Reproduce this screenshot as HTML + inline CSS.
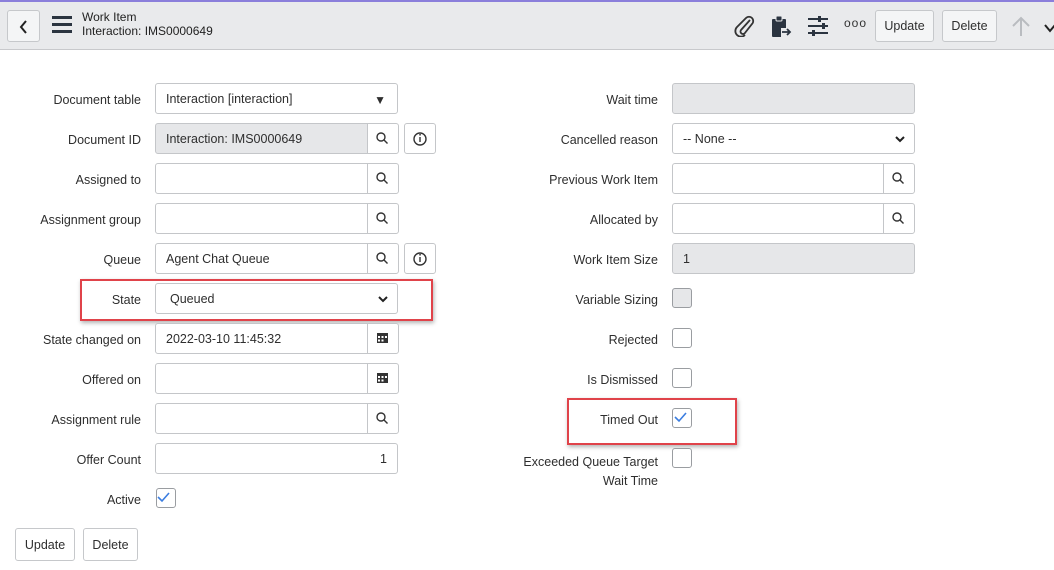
<!DOCTYPE html>
<html><head><style>
*{box-sizing:border-box;margin:0;padding:0}
body{width:1054px;height:570px;background:#fff;font-family:"Liberation Sans",sans-serif;font-size:12.5px;color:#2e2e2e;position:relative;overflow:hidden}
.hdr{position:absolute;left:0;top:0;width:1054px;height:50px;background:#e9eaec;border-top:2px solid #8b7fdb;border-bottom:1px solid #c8c9cc}
.a{position:absolute}
.btn{position:absolute;background:#f4f5f6;border:1px solid #c6c8cb;border-radius:3px;text-align:center;color:#2e2e2e;font-size:12.5px}
.lbl{position:absolute;text-align:right;width:200px;color:#2e2e2e;margin-top:2px}
.in{position:absolute;height:31px;border:1px solid #c4c6c9;border-radius:3px;background:#fff;padding:0 10px;line-height:31px}
.ro{background:#e6e7e9}
.sb{position:absolute;width:32px;height:31px;border:1px solid #c4c6c9;border-radius:0 3px 3px 0;background:#fff}
.ib{position:absolute;width:32px;height:31px;border:1px solid #c4c6c9;border-radius:3px;background:#fff}
.cb{position:absolute;width:20px;height:20px;border:1px solid #9a9da1;border-radius:3px;background:#fff}
.red{position:absolute;border:2px solid #e0434a;box-shadow:1px 2px 4px rgba(0,0,0,.3)}
svg{position:absolute}
</style></head><body>
<div class="hdr">
 <div class="btn" style="left:7px;top:8px;width:33px;height:32px;background:#f4f5f6"><svg style="left:11px;top:9px" width="10" height="14"><path d="M7 1 L2 7 L7 13" stroke="#222" stroke-width="2" fill="none"/></svg></div>
 <svg style="left:52px;top:14px" width="20" height="18"><rect y="0" width="20" height="3" fill="#2b3440"/><rect y="7" width="20" height="3" fill="#2b3440"/><rect y="14" width="20" height="3" fill="#2b3440"/></svg>
 <div class="a" style="left:82px;top:8px;font-size:12px;line-height:14px;color:#222">Work Item<br>Interaction: IMS0000649</div>
 <svg style="left:733px;top:13px" width="22" height="22"><path d="M17 5 L8 15 a2.5 2.5 0 0 0 3.5 3.5 L19 9 a4 4 0 0 0 -6 -6 L4 12 a5.5 5.5 0 0 0 8 8" stroke="#333" stroke-width="1.8" fill="none"/></svg>
 <svg style="left:770px;top:13px" width="22" height="24"><rect x="2" y="4" width="14" height="18" rx="1" fill="#2b3440"/><rect x="6" y="1" width="6" height="5" rx="1" fill="#2b3440" stroke="#e9eaec"/><rect x="11" y="13" width="5" height="9" fill="#e9eaec"/><path d="M12 17 h8 M17 14 l3 3 -3 3" stroke="#2b3440" stroke-width="1.8" fill="none"/></svg>
 <svg style="left:807px;top:14px" width="22" height="20"><path d="M1 3h20M1 10h20M1 17h20" stroke="#2b3440" stroke-width="2"/><rect x="11" y="0" width="3" height="6" fill="#2b3440"/><rect x="15" y="7" width="3" height="6" fill="#2b3440"/><rect x="5" y="14" width="3" height="6" fill="#2b3440"/></svg>
 <div class="a" style="left:844px;top:14px;font-size:12px;letter-spacing:1px;color:#333">ooo</div>
 <div class="btn" style="left:875px;top:8px;width:59px;height:32px;line-height:30px">Update</div>
 <div class="btn" style="left:942px;top:8px;width:55px;height:32px;line-height:30px">Delete</div>
 <svg style="left:1010px;top:13px" width="22" height="22"><path d="M11 21 V3 M3 11 L11 3 L19 11" stroke="#b9bcc0" stroke-width="2" fill="none"/></svg>
 <svg style="left:1044px;top:20px" width="10" height="12"><path d="M1 3 L6 9 L11 3" stroke="#222" stroke-width="2" fill="none"/></svg>
</div>

<div class="lbl" style="left:-59px;top:91px">Document table</div>
<div class="in" style="left:155px;top:83px;width:243px">Interaction [interaction]<span style="position:absolute;right:11px;top:1px;font-size:12px">▼</span></div>

<div class="lbl" style="left:-59px;top:131px">Document ID</div>
<div class="in ro" style="left:155px;top:123px;width:213px;border-radius:3px 0 0 3px">Interaction: IMS0000649</div>
<div class="sb" style="left:367px;top:123px"></div>
<div class="ib" style="left:404px;top:123px"></div>

<div class="lbl" style="left:-59px;top:171px">Assigned to</div>
<div class="in" style="left:155px;top:163px;width:213px;border-radius:3px 0 0 3px"></div>
<div class="sb" style="left:367px;top:163px"></div>

<div class="lbl" style="left:-59px;top:211px">Assignment group</div>
<div class="in" style="left:155px;top:203px;width:213px;border-radius:3px 0 0 3px"></div>
<div class="sb" style="left:367px;top:203px"></div>

<div class="lbl" style="left:-59px;top:251px">Queue</div>
<div class="in" style="left:155px;top:243px;width:213px;border-radius:3px 0 0 3px">Agent Chat Queue</div>
<div class="sb" style="left:367px;top:243px"></div>
<div class="ib" style="left:404px;top:243px"></div>

<div class="lbl" style="left:-59px;top:291px">State</div>
<div class="in" style="left:155px;top:283px;width:243px;padding-left:14px">Queued<svg style="right:9px;top:12px" width="10" height="8"><path d="M1 1 L5 5 L9 1" stroke="#222" stroke-width="2" fill="none"/></svg></div>
<div class="red" style="left:80px;top:279px;width:353px;height:42px"></div>

<div class="lbl" style="left:-59px;top:331px">State changed on</div>
<div class="in" style="left:155px;top:323px;width:213px;border-radius:3px 0 0 3px">2022-03-10 11:45:32</div>
<div class="sb" style="left:367px;top:323px"></div>

<div class="lbl" style="left:-59px;top:371px">Offered on</div>
<div class="in" style="left:155px;top:363px;width:213px;border-radius:3px 0 0 3px"></div>
<div class="sb" style="left:367px;top:363px"></div>

<div class="lbl" style="left:-59px;top:411px">Assignment rule</div>
<div class="in" style="left:155px;top:403px;width:213px;border-radius:3px 0 0 3px"></div>
<div class="sb" style="left:367px;top:403px"></div>

<div class="lbl" style="left:-59px;top:451px">Offer Count</div>
<div class="in" style="left:155px;top:443px;width:243px;text-align:right">1</div>

<div class="lbl" style="left:-59px;top:491px">Active</div>
<div class="cb" style="left:156px;top:488px"></div>

<div class="lbl" style="left:458px;top:91px">Wait time</div>
<div class="in ro" style="left:672px;top:83px;width:243px"></div>
<div class="lbl" style="left:458px;top:131px">Cancelled reason</div>
<div class="in" style="left:672px;top:123px;width:243px">-- None --<svg style="right:9px;top:12px" width="10" height="8"><path d="M1 1 L5 5 L9 1" stroke="#222" stroke-width="2" fill="none"/></svg></div>
<div class="lbl" style="left:458px;top:171px">Previous Work Item</div>
<div class="in" style="left:672px;top:163px;width:212px;border-radius:3px 0 0 3px"></div>
<div class="sb" style="left:883px;top:163px"></div>
<div class="lbl" style="left:458px;top:211px">Allocated by</div>
<div class="in" style="left:672px;top:203px;width:212px;border-radius:3px 0 0 3px"></div>
<div class="sb" style="left:883px;top:203px"></div>
<div class="lbl" style="left:458px;top:251px">Work Item Size</div>
<div class="in ro" style="left:672px;top:243px;width:243px">1</div>
<div class="lbl" style="left:458px;top:291px">Variable Sizing</div>
<div class="cb" style="left:672px;top:288px;background:#e6e7e9"></div>
<div class="lbl" style="left:458px;top:331px">Rejected</div>
<div class="cb" style="left:672px;top:328px"></div>
<div class="lbl" style="left:458px;top:371px">Is Dismissed</div>
<div class="cb" style="left:672px;top:368px"></div>
<div class="lbl" style="left:458px;top:411px">Timed Out</div>
<div class="cb" style="left:672px;top:408px"></div>
<div class="red" style="left:567px;top:398px;width:170px;height:47px"></div>
<div class="lbl" style="left:458px;top:451px;line-height:19px">Exceeded Queue Target<br>Wait Time</div>
<div class="cb" style="left:672px;top:448px"></div>

<div class="btn" style="left:15px;top:528px;width:60px;height:33px;line-height:33px;background:#fff">Update</div>
<div class="btn" style="left:83px;top:528px;width:55px;height:33px;line-height:33px;background:#fff">Delete</div>

<svg width="1054" height="570" style="left:0;top:0">
<g stroke="#333" stroke-width="1.4" fill="none">
<circle cx="381" cy="137" r="4"/><path d="M384 140 l3.5 3.5"/>
<circle cx="381" cy="177" r="4"/><path d="M384 180 l3.5 3.5"/>
<circle cx="381" cy="217" r="4"/><path d="M384 220 l3.5 3.5"/>
<circle cx="381" cy="257" r="4"/><path d="M384 260 l3.5 3.5"/>
<circle cx="381" cy="417" r="4"/><path d="M384 420 l3.5 3.5"/>
<circle cx="897" cy="177" r="4"/><path d="M900 180 l3.5 3.5"/>
<circle cx="897" cy="217" r="4"/><path d="M900 220 l3.5 3.5"/>
<circle cx="420" cy="139" r="6"/><path d="M420 137v5"/>
<circle cx="420" cy="259" r="6"/><path d="M420 257v5"/>
<path d="M158 497 l4 4 l7 -8" stroke="#3b7de0" stroke-width="1.6"/>
<path d="M675 417 l4 4 l7 -8" stroke="#3b7de0" stroke-width="1.6"/>
</g>
<g fill="#333"><rect x="419.3" y="134" width="1.5" height="1.5"/><rect x="419.3" y="254" width="1.5" height="1.5"/>
<rect x="377" y="333" width="11" height="10"/><rect x="377" y="373" width="11" height="10"/></g>
<g fill="#fff"><rect x="378" y="336" width="2" height="2"/><rect x="381.5" y="336" width="2" height="2"/><rect x="385" y="336" width="2" height="2"/><rect x="378" y="339.5" width="2" height="2"/><rect x="381.5" y="339.5" width="2" height="2"/>
<rect x="378" y="376" width="2" height="2"/><rect x="381.5" y="376" width="2" height="2"/><rect x="385" y="376" width="2" height="2"/><rect x="378" y="379.5" width="2" height="2"/><rect x="381.5" y="379.5" width="2" height="2"/></g>
</svg>
</body></html>
